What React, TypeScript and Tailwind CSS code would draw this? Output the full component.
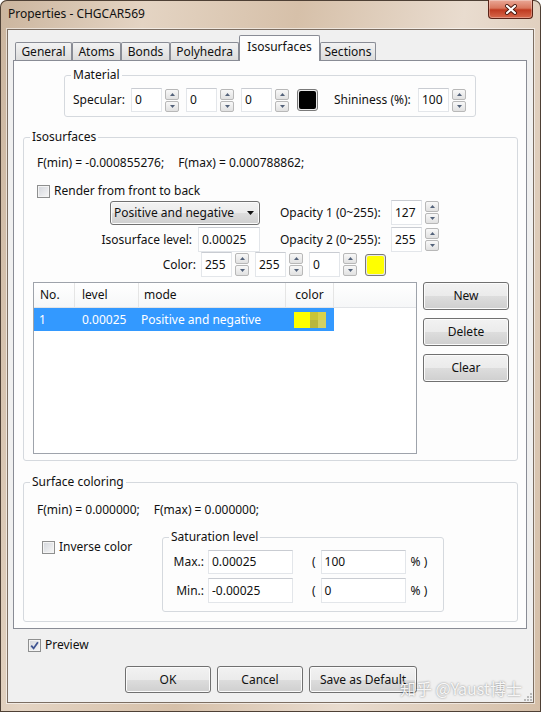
import type { ReactNode } from 'react';

const btnFace =
  'border border-[#707070] rounded-[3px] bg-[linear-gradient(#f2f2f2_0%,#ebebeb_50%,#dddddd_51%,#cfcfcf_100%)] shadow-[inset_0_0_0_1px_#fbfbfb]';

function Arrow({ up }: { up?: boolean }) {
  return (
    <svg width="5" height="3" viewBox="0 0 5 3" className="block">
      <path d={up ? 'M0 3 L2.5 0 L5 3 Z' : 'M0 0 L5 0 L2.5 3 Z'} fill="#53627a" />
    </svg>
  );
}

function Spin() {
  return (
    <div className="flex flex-col w-[14px] h-[23px] gap-px">
      <div className="flex-1 flex items-center justify-center rounded-[2px] border border-[#b8b8b8] bg-[linear-gradient(#f8f8f8,#e1e1e1)]">
        <Arrow up />
      </div>
      <div className="flex-1 flex items-center justify-center rounded-[2px] border border-[#b8b8b8] bg-[linear-gradient(#f8f8f8,#e1e1e1)]">
        <Arrow />
      </div>
    </div>
  );
}

function TextBox({ value, className = '' }: { value: string; className?: string }) {
  return (
    <div
      className={`flex items-center bg-white border border-[#e3e6ea] border-t-[#c9ccd2] pl-[3px] ${className}`}
    >
      {value}
    </div>
  );
}

function SpinBox({ value, tall }: { value: string; tall?: boolean }) {
  return (
    <div className="flex items-center gap-[3px]">
      <TextBox value={value} className={tall ? 'w-[31px] h-[25px]' : 'w-[31px] h-[24px]'} />
      <Spin />
    </div>
  );
}

function Swatch({ color }: { color: string }) {
  return (
    <div className="w-[21px] h-[22px] rounded-[3px] border border-[#7a7a7a] p-px bg-[#e8e8e8]">
      <div className="w-full h-full rounded-[2px]" style={{ backgroundColor: color }} />
    </div>
  );
}

function CheckBox({ label, checked }: { label: string; checked?: boolean }) {
  return (
    <div className="flex items-center gap-[4px]">
      <div className="w-[13px] h-[13px] border border-[#8e8f8f] bg-[linear-gradient(135deg,#d3d6dc,#f7f7f7)] shadow-[inset_0_0_0_1px_#f4f4f4] flex items-center justify-center">
        {checked && (
          <svg width="9" height="9" viewBox="0 0 9 9">
            <path d="M1.2 4.6 L3.6 7.4 L7.9 1.2" fill="none" stroke="#3f5492" strokeWidth="1.8" />
          </svg>
        )}
      </div>
      <span>{label}</span>
    </div>
  );
}

function Button({ label, className = '' }: { label: string; className?: string }) {
  return <div className={`flex items-center justify-center ${btnFace} ${className}`}>{label}</div>;
}

function GroupBox({
  label,
  className = '',
  children,
}: {
  label: string;
  className?: string;
  children: ReactNode;
}) {
  return (
    <fieldset className={`border border-[#d5d9de] rounded-[3px] ${className}`}>
      <legend className="ml-[6px] px-[2px] leading-[16px]">{label}</legend>
      {children}
    </fieldset>
  );
}

const tabs = [
  { label: 'General', w: 'w-[57px]' },
  { label: 'Atoms', w: 'w-[49px]' },
  { label: 'Bonds', w: 'w-[49px]' },
  { label: 'Polyhedra', w: 'w-[69px]' },
  { label: 'Isosurfaces', w: 'w-[81px]', active: true },
  { label: 'Sections', w: 'w-[56px]' },
];

const columns = 'grid grid-cols-[41px_64px_147px_48px]';

function IsoList() {
  return (
    <div className="w-[384px] h-[172px] border border-[#9ea3ab] bg-white flex flex-col">
      <div className="flex h-[25px] bg-[linear-gradient(#ffffff,#f6f7f8)] border-b border-[#e2e4e7]">
        <div className={columns}>
          <div className="pl-[6px] flex items-center border-r border-[#e5e5e5]">No.</div>
          <div className="pl-[7px] flex items-center border-r border-[#e5e5e5]">level</div>
          <div className="pl-[5px] flex items-center border-r border-[#e5e5e5]">mode</div>
          <div className="flex items-center justify-center border-r border-[#e5e5e5]">color</div>
        </div>
      </div>
      <div className={`${columns} h-[23px] w-[300px] bg-[#3399ff] text-white`}>
        <div className="pl-[5px] flex items-center">1</div>
        <div className="pl-[7px] flex items-center">0.00025</div>
        <div className="pl-[2px] flex items-center">Positive and negative</div>
        <div className="pl-[8px] flex items-center">
          <div className="w-[16px] h-[16px] bg-[#ffff00]" />
          <div className="grid grid-cols-2 w-[16px] h-[16px]">
            <div className="bg-[#c9c536]" />
            <div className="bg-[#d8d24c]" />
            <div className="bg-[#b9b63c]" />
            <div className="bg-[#d3d062]" />
          </div>
        </div>
      </div>
    </div>
  );
}

export default function App() {
  return (
    <div className="relative w-[541px] h-[712px] flex flex-col rounded-t-[7px] overflow-hidden text-[12px] leading-[16px] text-[#111] font-['Noto_Sans',sans-serif] bg-[linear-gradient(100deg,#cbb59e_0%,#e4d4c3_22%,#d6c0a9_45%,#e9dccf_70%,#d4bea7_100%)] shadow-[inset_0_0_0_1px_#4e4035]">
      {/* title bar */}
      <div className="h-[29px] flex items-start justify-between pl-[8px] pr-[8px]">
        <span className="mt-[6px]">Properties - CHGCAR569</span>
        <div className="w-[45px] h-[19px] rounded-b-[4px] border border-t-0 border-[#5a2317] bg-[linear-gradient(#eaa897_0%,#d9775e_45%,#bf3a20_55%,#d7694c_100%)] shadow-[inset_0_0_0_1px_rgba(255,255,255,0.3)] flex items-center justify-center">
          <svg width="14" height="11" viewBox="0 0 14 11">
            <path d="M3 2 L11 9 M11 2 L3 9" stroke="#4a1a10" strokeWidth="4" strokeLinecap="round" />
            <path d="M3 2 L11 9 M11 2 L3 9" stroke="#ffffff" strokeWidth="2.2" strokeLinecap="round" />
          </svg>
        </div>
      </div>

      {/* client area */}
      <div className="relative mx-[7px] h-[674px] border border-[#7c6e62] bg-[#f0f0f0] flex flex-col shadow-[0_0_0_1px_rgba(255,255,255,0.55)]">
        <div className="mt-[5px] pl-[7px] h-[25px] flex items-end">
          {tabs.map(t =>
            t.active ? (
              <div
                key={t.label}
                className={`${t.w} relative z-10 h-[26px] -mb-px pb-[4px] flex items-center justify-center border border-b-0 border-[#898c95] bg-[#fdfdfd] rounded-t-[2px]`}
              >
                {t.label}
              </div>
            ) : (
              <div
                key={t.label}
                className={`${t.w} h-[18px] flex items-center justify-center border border-b-0 border-[#898c95] bg-[linear-gradient(#f3f3f3,#dcdcdc)] rounded-t-[2px]`}
              >
                {t.label}
              </div>
            ),
          )}
        </div>

        {/* tab page */}
        <div className="ml-[5px] w-[514px] h-[569px] border border-[#898c95] bg-[#fdfdfd] flex flex-col">
          <GroupBox label="Material" className="ml-[50px] mt-[6px] w-[412px] h-[50px]">
            <div className="mt-[5px] pl-[8px] flex items-center h-[24px]">
              <span className="w-[58px]">Specular:</span>
              <div className="flex items-center gap-[7px]">
                <SpinBox value="0" />
                <SpinBox value="0" />
                <SpinBox value="0" />
              </div>
              <div className="ml-[8px]">
                <Swatch color="#000000" />
              </div>
              <span className="ml-[16px] w-[84px]">Shininess (%):</span>
              <SpinBox value="100" />
            </div>
          </GroupBox>

          <GroupBox label="Isosurfaces" className="ml-[9px] mt-[12px] w-[495px] h-[332px]">
            <div className="mt-[10px] pl-[13px] flex gap-[14px]">
              <span>F(min) = -0.000855276;</span>
              <span>F(max) = 0.000788862;</span>
            </div>
            <div className="mt-[12px] pl-[13px]">
              <CheckBox label="Render from front to back" />
            </div>

            <div className="mt-[1px] flex items-center h-[25px]">
              <div className="w-[236px] flex justify-end">
                <div className={`w-[150px] h-[24px] flex items-center justify-between pl-[3px] pr-[5px] ${btnFace}`}>
                  <span>Positive and negative</span>
                  <svg width="7" height="4" viewBox="0 0 7 4">
                    <path d="M0 0 L7 0 L3.5 4 Z" fill="#111" />
                  </svg>
                </div>
              </div>
              <div className="ml-[20px] flex items-center">
                <span className="w-[111px]">Opacity 1 (0~255):</span>
                <SpinBox value="127" tall />
              </div>
            </div>

            <div className="mt-[2px] flex items-center h-[25px]">
              <div className="w-[236px] flex items-center justify-end gap-[6px]">
                <span>Isosurface level:</span>
                <TextBox value="0.00025" className="w-[62px] h-[25px]" />
              </div>
              <div className="ml-[20px] flex items-center">
                <span className="w-[111px]">Opacity 2 (0~255):</span>
                <SpinBox value="255" tall />
              </div>
            </div>

            <div className="flex items-center h-[25px]">
              <span className="w-[172px] text-right">Color:</span>
              <div className="ml-[5px] flex items-center gap-[6px]">
                <SpinBox value="255" tall />
                <SpinBox value="255" tall />
                <SpinBox value="0" tall />
              </div>
              <div className="ml-[8px]">
                <Swatch color="#ffff00" />
              </div>
            </div>

            <div className="mt-[5px] pl-[9px] flex gap-[6px]">
              <IsoList />
              <div className="flex flex-col gap-[8px]">
                <Button label="New" className="w-[86px] h-[28px]" />
                <Button label="Delete" className="w-[86px] h-[28px]" />
                <Button label="Clear" className="w-[86px] h-[28px]" />
              </div>
            </div>
          </GroupBox>

          <GroupBox label="Surface coloring" className="ml-[9px] mt-[13px] w-[495px] h-[148px]">
            <div className="mt-[12px] pl-[13px] flex gap-[14px]">
              <span>F(min) = 0.000000;</span>
              <span>F(max) = 0.000000;</span>
            </div>
            <div className="mt-[11px] pl-[18px] flex items-start">
              <div className="w-[120px] mt-[10px]">
                <CheckBox label="Inverse color" />
              </div>
              <GroupBox label="Saturation level" className="w-[282px] h-[83px]">
                <div className="mt-[5px] flex items-center h-[24px]">
                  <span className="w-[41px] text-right">Max.:</span>
                  <TextBox value="0.00025" className="ml-[4px] w-[85px] h-[24px]" />
                  <span className="ml-[19px]">(</span>
                  <TextBox value="100" className="ml-[5px] w-[85px] h-[24px]" />
                  <span className="ml-[5px]">% )</span>
                </div>
                <div className="mt-[4px] flex items-center h-[25px]">
                  <span className="w-[41px] text-right">Min.:</span>
                  <TextBox value="-0.00025" className="ml-[4px] w-[85px] h-[25px]" />
                  <span className="ml-[19px]">(</span>
                  <TextBox value="0" className="ml-[5px] w-[85px] h-[25px]" />
                  <span className="ml-[5px]">% )</span>
                </div>
              </GroupBox>
            </div>
          </GroupBox>
        </div>

        <div className="mt-[8px] pl-[20px]">
          <CheckBox label="Preview" checked />
        </div>

        <div className="mt-[13px] pl-[117px] flex gap-[6px]">
          <Button label="OK" className="w-[86px] h-[27px]" />
          <Button label="Cancel" className="w-[86px] h-[27px]" />
          <Button label="Save as Default" className="w-[108px] h-[27px]" />
        </div>

        {/* size grip */}
        <svg width="8" height="8" viewBox="0 0 8 8" className="absolute right-[1px] bottom-[1px]">
          <g fill="#b9b9b9">
            <rect x="6" y="0" width="2" height="2" />
            <rect x="3" y="3" width="2" height="2" />
            <rect x="6" y="3" width="2" height="2" />
            <rect x="0" y="6" width="2" height="2" />
            <rect x="3" y="6" width="2" height="2" />
            <rect x="6" y="6" width="2" height="2" />
          </g>
        </svg>
      </div>

      <div className="absolute left-[400px] top-[678px] whitespace-nowrap text-[16px] leading-[20px] text-white/90 font-['Noto_Sans_CJK_SC',sans-serif] [text-shadow:0_0_2px_rgba(0,0,0,0.5)]">
        知乎 @Yaust博士
      </div>
    </div>
  );
}
